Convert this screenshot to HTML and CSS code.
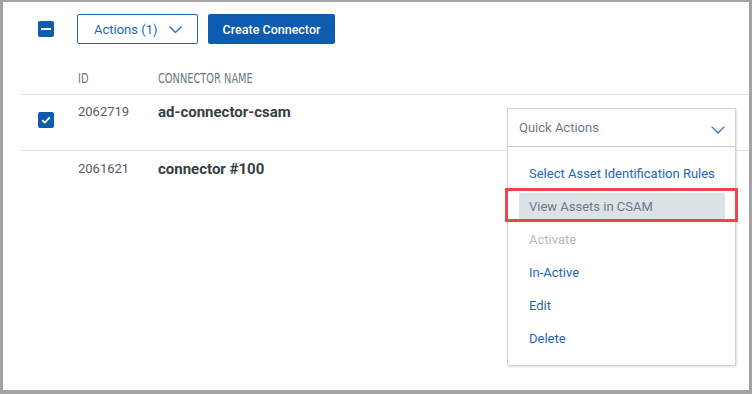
FILE: index.html
```html
<!DOCTYPE html>
<html lang="en">
<head>
    <meta charset="UTF-8">
    <title>Connectors</title>
    <link rel="stylesheet" href="styles.css">
</head>
<body>
    <div class="frame">
        <div class="toolbar">
            <span class="check check-partial"><span class="dash"></span></span>
            <button class="actions-button">
                Actions (1)
                <svg class="chevron" width="13" height="7" viewBox="0 0 13 7"><path d="M0.5 0.5 L6.5 6.5 L12.5 0.5" fill="none" stroke="#1a66b8" stroke-width="1.2"/></svg>
            </button>
            <button class="create-button">Create Connector</button>
        </div>

        <div class="table">
            <div class="row head">
                <span class="cell-check"></span>
                <span class="cell-id"><span class="head-text">ID</span></span>
                <span class="cell-name"><span class="head-text">CONNECTOR NAME</span></span>
            </div>
            <div class="row body-row">
                <span class="cell-check">
                    <span class="check">
                        <svg width="10" height="8" viewBox="0 0 10 8"><path d="M1.2 4.2 L3.8 6.6 L8.8 1.4" fill="none" stroke="#fff" stroke-width="1.8"/></svg>
                    </span>
                </span>
                <span class="cell-id">2062719</span>
                <span class="cell-name">ad-connector-csam</span>
            </div>
            <div class="row body-row last">
                <span class="cell-check"></span>
                <span class="cell-id">2061621</span>
                <span class="cell-name">connector #100</span>
            </div>
        </div>

        <div class="quick-actions">
            <div class="quick-head">
                <span>Quick Actions</span>
                <svg width="14" height="8" viewBox="0 0 14 8"><path d="M0.6 0.6 L7 7 L13.4 0.6" fill="none" stroke="#2a73c2" stroke-width="1.3"/></svg>
            </div>
            <ul class="quick-list">
                <li>Select Asset Identification Rules</li>
                <li class="hovered">View Assets in CSAM</li>
                <li class="disabled">Activate</li>
                <li>In-Active</li>
                <li>Edit</li>
                <li>Delete</li>
            </ul>
        </div>

        <div class="callout"></div>
    </div>
</body>
</html>
```

FILE: styles.css
```css
html, body {
    margin: 0;
    padding: 0;
}

body {
    font-family: Roboto, "Liberation Sans", sans-serif;
    background: #a4a4a4;
}

.frame {
    position: relative;
    box-sizing: border-box;
    width: 752px;
    height: 394px;
    background: #fff;
    border-style: solid;
    border-color: #a4a4a4;
    border-width: 2px 3px 4px 3px;
    overflow: hidden;
}

.toolbar {
    display: flex;
    align-items: center;
    padding: 12px 0 0 35px;
    height: 30px;
}

.check {
    display: inline-flex;
    align-items: center;
    justify-content: center;
    width: 16px;
    height: 16px;
    background: #0d5cb0;
    border-radius: 2px;
}

.check-partial {
    margin-right: 23px;
}

.dash {
    width: 10px;
    height: 2px;
    background: #fff;
}

.actions-button {
    box-sizing: border-box;
    display: flex;
    align-items: center;
    width: 121px;
    height: 30px;
    padding: 0 0 0 16px;
    border: 1px solid #1a66b8;
    border-radius: 2px;
    background: #fff;
    color: #1a66b8;
    font-family: inherit;
    font-size: 13px;
}

.actions-button .chevron {
    margin-left: 11px;
    margin-top: 1px;
}

.create-button {
    box-sizing: border-box;
    height: 30px;
    width: 127px;
    margin-left: 10px;
    border: none;
    border-radius: 2px;
    background: #0d5cb0;
    color: #fff;
    font-family: inherit;
    font-size: 12.5px;
    font-weight: 500;
}

.table {
    margin-left: 17px;
}

.row {
    display: flex;
    border-bottom: 1px solid #dde2e5;
}

.row.last {
    border-bottom: none;
    padding-top: 10px;
}

.head {
    padding: 25px 0 7px;
    line-height: 17px;
}

.head-text {
    display: inline-block;
    font-family: "DejaVu Sans Condensed", "DejaVu Sans", sans-serif;
    font-stretch: condensed;
    font-size: 14px;
    color: #6d7a84;
    transform: scaleX(0.78);
    transform-origin: left center;
}

.cell-check {
    width: 58px;
    padding-left: 18px;
    box-sizing: border-box;
}

.cell-id {
    width: 80px;
}

.body-row {
    height: 46px;
    padding-top: 9px;
    line-height: 16px;
    font-size: 13px;
    color: #555d63;
}

.body-row .check {
    margin-top: 8px;
}

.body-row .cell-name {
    font-size: 15px;
    font-weight: bold;
    color: #363e44;
}

.quick-actions {
    position: absolute;
    left: 504px;
    top: 106px;
    box-sizing: border-box;
    width: 229px;
    height: 258px;
    background: #fff;
    border: 1px solid #cdd5da;
    box-shadow: 1px 1px 2px rgba(0, 0, 0, 0.12);
}

.quick-head {
    display: flex;
    align-items: center;
    justify-content: space-between;
    height: 37px;
    padding: 0 10px 0 11px;
    border-bottom: 1px solid #bfcbd3;
    font-size: 13px;
    color: #6c7a86;
}

.quick-head svg {
    margin-top: 5px;
}

.quick-list {
    list-style: none;
    margin: 0;
    padding: 13px 10px 0 11px;
    display: flex;
    flex-direction: column;
    gap: 5px;
}

.quick-list li {
    height: 28px;
    line-height: 28px;
    padding-left: 10px;
    font-size: 13px;
    color: #1f67b6;
}

.quick-list li.hovered {
    background: #dce3e7;
    color: #6c7a86;
}

.quick-list li.disabled {
    color: #b3bcc3;
}

.callout {
    position: absolute;
    left: 502px;
    top: 186px;
    box-sizing: border-box;
    width: 233px;
    height: 34px;
    border: 3px solid #f0434a;
}
```
